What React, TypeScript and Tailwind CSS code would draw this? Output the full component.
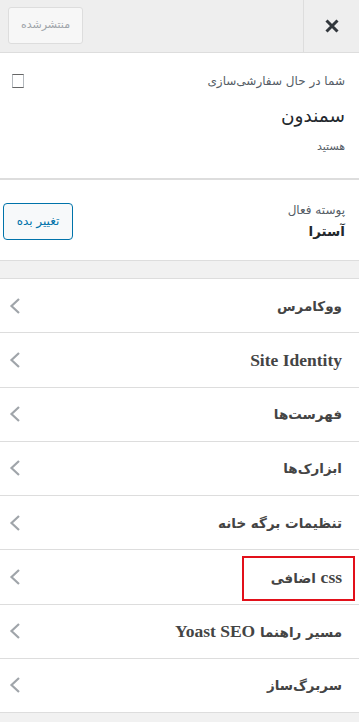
import type { ReactNode } from "react";

const sections = [
  "ووکامرس",
  "Site Identity",
  "فهرست‌ها",
  "ابزارک‌ها",
  "تنظیمات برگه خانه",
  "css اضافی",
  "مسیر راهنما Yoast SEO",
  "سربرگ‌ساز"
];

function Chevron() {
  return (
    <svg width="14" height="20" viewBox="0 0 14 20" aria-hidden="true">
      <path d="M12 3 L4.5 10 L12 17" fill="none" stroke="#a0a5aa" strokeWidth="2.2" />
    </svg>
  );
}

// latin runs are set a bit larger than the persian ones, as in the screenshot
function Title({ text }: { text: string }) {
  const parts = text.split(/([A-Za-z][A-Za-z ]*[A-Za-z]|[A-Za-z]+)/).filter(Boolean);
  return (
    <span className="font-bold text-[#444444]">
      {parts.map((part, index) =>
        /[A-Za-z]/.test(part) ? (
          <span key={index} className="text-[17.5px] [font-family:'Liberation_Serif',serif]">
            {part}
          </span>
        ) : (
          <span key={index} className="text-[13.5px]">
            {part}
          </span>
        )
      )}
    </span>
  );
}

function SectionRow({ title, highlight }: { title: string; highlight?: boolean }) {
  return (
    <div className="relative flex h-[54.25px] items-center justify-between border-b border-[#dddddd] bg-white pr-[17px] pl-[7px]">
      <Title text={title} />
      <Chevron />
      {highlight ? (
        <div className="absolute top-[6px] right-[4px] h-[45px] w-[113px] border-2 border-[#e2101a]" />
      ) : null}
    </div>
  );
}

function Panel({ children, className }: { children: ReactNode; className: string }) {
  return <div className={className}>{children}</div>;
}

export default function App() {
  return (
    <div
      dir="rtl"
      className="flex h-[722px] w-[359px] flex-col overflow-hidden bg-[#f1f1f1] [font-family:'DejaVu_Sans',sans-serif]"
    >
      <div className="flex h-[53px] shrink-0 items-stretch border-b border-[#dddddd] bg-[#eeeeee]">
        <button
          type="button"
          className="flex w-[56px] items-center justify-center border-l border-[#dddddd]"
        >
          <svg width="16" height="16" viewBox="0 0 16 16" aria-hidden="true">
            <path d="M2.5 2.5 L13.5 13.5 M13.5 2.5 L2.5 13.5" stroke="#32373c" strokeWidth="3" />
          </svg>
        </button>
        <div className="flex flex-1 items-center justify-end pl-[8px]">
          <button
            type="button"
            className="mt-[-1px] h-[37px] w-[75px] rounded-[3px] border border-[#dddddd] bg-[#f7f7f7] text-[11px] text-[#a0a5aa]"
          >
            منتشرشده
          </button>
        </div>
      </div>

      <Panel className="relative h-[127px] shrink-0 border-b-2 border-[#dddddd] bg-white pt-[18px] pr-[14px]">
        <div className="text-[12px] leading-[20px] text-[#555d66]">شما در حال سفارشی‌سازی</div>
        <div className="mt-[12px] text-[18.5px] leading-[26px] text-[#23282d]">سمندون</div>
        <div className="mt-[8px] text-[11px] leading-[20px] text-[#555d66]">هستید</div>
        <div className="absolute top-[21px] left-[12px] h-[14px] w-[12px] border border-[#b4b9be] border-y-[#666666]" />
      </Panel>

      <Panel className="flex h-[81px] shrink-0 items-center justify-between border-b border-[#dddddd] bg-white pr-[14px] pl-[3px]">
        <div className="flex flex-col pt-[2px]">
          <span className="text-[12px] leading-[18px] text-[#555d66]">پوسته فعال</span>
          <span className="mt-[2px] text-[13.5px] font-bold leading-[20px] text-[#23282d]">آسترا</span>
        </div>
        <button
          type="button"
          className="mt-[2px] h-[37px] w-[70px] rounded-[4px] border border-[#0073aa] bg-[#f7f9fa] text-[12px] text-[#0073aa]"
        >
          تغییر بده
        </button>
      </Panel>

      <div className="h-[18px] shrink-0 border-b border-[#dddddd]" />

      <div className="flex flex-col">
        {sections.map((title) => (
          <SectionRow key={title} title={title} highlight={title === "css اضافی"} />
        ))}
      </div>
    </div>
  );
}
